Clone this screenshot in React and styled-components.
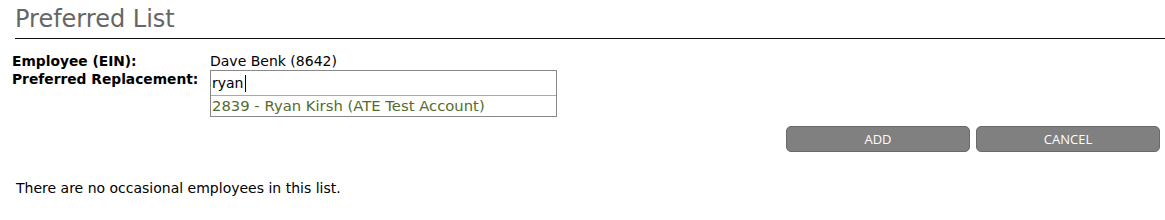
import React from "react";
import styled, { createGlobalStyle } from "styled-components";

const Global = createGlobalStyle`
  html, body { margin: 0; padding: 0; background: #fff; }
  body { font-family: "DejaVu Sans", Verdana, sans-serif; font-size: 14px; color: #000; }
`;

const Page = styled.div`
  padding: 0 5px 0 12px;
`;

const Heading = styled.h1`
  margin: 0 -5px 0 3px;
  padding: 5px 0 4px 0;
  font-family: "DejaVu Sans", Verdana, sans-serif;
  font-weight: normal;
  font-size: 24px;
  line-height: 29px;
  color: #666;
  border-bottom: 1px solid #111;
`;

const Form = styled.div`
  display: grid;
  grid-template-columns: 198px 347px;
  margin-top: 13px;
`;

const Label = styled.div`
  font-weight: bold;
  font-size: 13.8px;
  line-height: 18px;
  height: 18px;
`;

const Value = styled.div`
  line-height: 18px;
  height: 18px;
`;

const Combo = styled.div`
  border: 1px solid #888;
  width: 345px;
`;

const Input = styled.div`
  height: 24px;
  display: flex;
  align-items: center;
  padding-left: 1px;
  font-size: 14px;
  border-bottom: 1px solid #aaa;
`;

const Caret = styled.span`
  display: inline-block;
  width: 1px;
  height: 17px;
  background: #000;
  margin-left: 1px;
`;

const Option = styled.div`
  height: 20px;
  line-height: 20px;
  padding-left: 1px;
  font-size: 14.8px;
  color: #556b2f;
  white-space: nowrap;
`;

const Actions = styled.div`
  display: flex;
  justify-content: flex-end;
  gap: 6px;
  margin-top: 9px;
`;

const Button = styled.button`
  width: 184px;
  height: 26px;
  background: #808080;
  border: 1px solid #6a6a6a;
  border-radius: 5px;
  color: #fff;
  font-family: "Open Sans", "DejaVu Sans", sans-serif;
  font-size: 13px;
  padding: 0;
  cursor: pointer;
`;

const Empty = styled.p`
  margin: 27px 0 0 4px;
  line-height: 18px;
`;

export default function App() {
  return (
    <>
      <Global />
      <Page>
        <Heading>Preferred List</Heading>
        <Form>
          <Label>Employee (EIN):</Label>
          <Value>Dave Benk (8642)</Value>
          <Label>Preferred Replacement:</Label>
          <Combo>
            <Input>
              ryan<Caret />
            </Input>
            <Option>2839 - Ryan Kirsh (ATE Test Account)</Option>
          </Combo>
        </Form>
        <Actions>
          <Button>ADD</Button>
          <Button>CANCEL</Button>
        </Actions>
        <Empty>There are no occasional employees in this list.</Empty>
      </Page>
    </>
  );
}
